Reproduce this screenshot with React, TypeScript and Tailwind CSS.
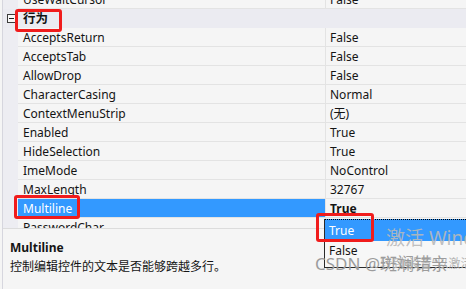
import React from "react";

type Row = { name: string; value: string; cat?: boolean; sel?: boolean };

const rows: Row[] = [
  { name: "UseWaitCursor", value: "False" },
  { name: "行为", value: "", cat: true },
  { name: "AcceptsReturn", value: "False" },
  { name: "AcceptsTab", value: "False" },
  { name: "AllowDrop", value: "False" },
  { name: "CharacterCasing", value: "Normal" },
  { name: "ContextMenuStrip", value: "(无)" },
  { name: "Enabled", value: "True" },
  { name: "HideSelection", value: "True" },
  { name: "ImeMode", value: "NoControl" },
  { name: "MaxLength", value: "32767" },
  { name: "Multiline", value: "True", sel: true },
  { name: "PasswordChar", value: "" },
];

function MinusBox() {
  return (
    <svg width="9" height="9" viewBox="0 0 9 9" className="block">
      <rect x="0.5" y="0.5" width="8" height="8" fill="#f8f8f8" stroke="#3c3c3c" strokeWidth="1" />
      <line x1="2" y1="4.5" x2="7" y2="4.5" stroke="#1e1e1e" strokeWidth="1" />
    </svg>
  );
}

export default function App() {
  return (
    <div className="relative w-[466px] h-[289px] overflow-hidden bg-[#f5f5f5] text-[12px] text-[#141414] font-['Noto_Sans','Noto_Sans_CJK_SC',sans-serif]">
      <div className="flex flex-col h-full border-l border-[#d6d6de] ml-[2px]">
        <div className="h-[228px] overflow-hidden shrink-0">
          <div className="flex flex-col mt-[-10px]">
            {rows.map((r) =>
              r.cat ? (
                <div key={r.name} className="flex h-[19px] bg-[#ebebf1]">
                  <div className="w-[15px] shrink-0 flex items-center justify-center pl-[1px]">
                    <MinusBox />
                  </div>
                  <div className="pl-[5px] leading-[20px] font-bold text-[12.5px]">{r.name}</div>
                </div>
              ) : (
                <div key={r.name} className="flex h-[19px]">
                  <div className="w-[15px] shrink-0 bg-[#ededf2]" />
                  <div
                    className={`w-[308px] shrink-0 border-b border-r border-[#e3e3e3] pl-[5px] leading-[20px] ${
                      r.sel ? "bg-[#3399ff] text-white" : ""
                    }`}
                  >
                    {r.name}
                  </div>
                  <div className={`flex-1 border-b border-[#e3e3e3] pl-[4px] leading-[20px] ${r.sel ? "font-bold" : ""}`}>
                    {r.value}
                  </div>
                </div>
              )
            )}
          </div>
        </div>
        <div className="flex-1 border-t border-[#dcdcdc] pt-[9px] pl-[7px]">
          <div className="font-bold leading-[19px]">Multiline</div>
          <div className="leading-[20px]">控制编辑控件的文本是否能够跨越多行。</div>
        </div>
      </div>

      {/* dropdown list */}
      <div className="absolute left-[324px] top-[219px] w-[150px] h-[49px] border-l border-b border-[#2a2a2a] bg-[#f7f7f7] flex flex-col">
        <div className="h-[22px] border-t border-dotted border-[#000] bg-[#3399ff] text-white pl-[4px] leading-[22px]">True</div>
        <div className="h-[19px] pl-[4px] leading-[19px]">False</div>
      </div>

      {/* watermarks */}
      <div className="absolute left-[386px] top-[226px] text-[19px] leading-[24px] text-[#b9b9b9]/90 whitespace-nowrap">
        激活 Windows
      </div>
      <div className="absolute left-[380px] top-[256px] text-[12px] leading-[16px] text-[#b5b5b5] whitespace-nowrap">
        转到“设置”以激活 Windows。
      </div>
      <div className="absolute left-[315px] top-[253px] text-[17px] leading-[22px] text-[#9c9c9c] whitespace-nowrap">
        CSDN @斑斓错亲
      </div>

      {/* red annotation boxes */}
      <div className="absolute left-[15px] top-[9px] w-[47px] h-[23px] border-[3px] border-[#f01c1c] rounded-[3px]" />
      <div className="absolute left-[14px] top-[195px] w-[66px] h-[24px] border-[3px] border-[#f01c1c] rounded-[3px]" />
      <div className="absolute left-[316px] top-[213px] w-[58px] h-[29px] border-[3px] border-[#f01c1c] rounded-[3px]" />
    </div>
  );
}
